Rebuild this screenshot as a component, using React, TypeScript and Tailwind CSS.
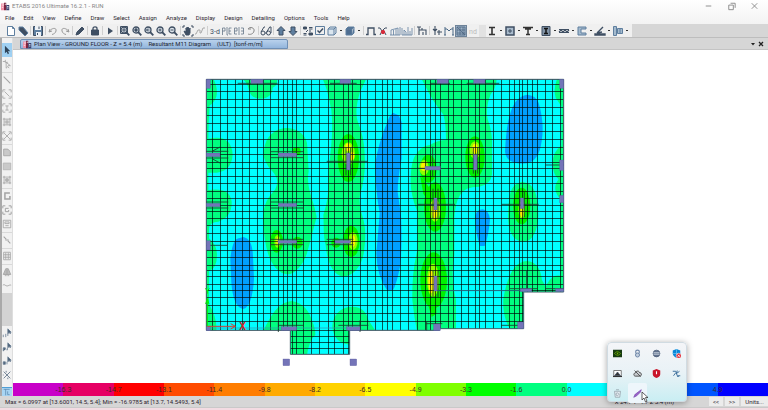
import type { ReactNode } from "react";

const ink = "#3f4f63";
const blue = "#5f7f9f";

function Glyph({ children, size = "size-3" }: { children: ReactNode; size?: string }) {
  return (
    <svg viewBox="0 0 12 12" fill="none" stroke={ink} strokeWidth="1" className={size} aria-hidden="true">
      {children}
    </svg>
  );
}

const lens = (inner: ReactNode) => (
  <>
    <circle cx="5" cy="5" r="3" fill="#dfe6ec" strokeWidth="1.3" />
    <path d="M7.2 7.2 10.3 10.3" strokeWidth="1.9" />
    {inner}
  </>
);

const cube = (fill: string) => (
  <>
    <path d="M2 4h6v6H2zM2 4l2-2h6L8 4M10 2v6l-2 2" fill={fill} stroke={blue} />
  </>
);

type Tool = { name: string; icon: ReactNode; menu?: boolean; on?: boolean };

const toolGroups: Tool[][] = [
  [
    { name: "New model", icon: <path d="M2.500 1.500h5l2 2v7h-7zM7.500 1.500v2h2" fill="#fff" stroke={blue} /> },
    { name: "Open", icon: <path d="M2 2h4l5 6-3 3-6-6z" fill={ink} stroke={blue} /> },
  ],
  [
    {
      name: "Save",
      icon: (
        <>
          <path d="M1.500 1.500h9v9h-9z" fill={blue} />
          <path d="M3 1h6v4H3zM4 7h5v4H4z" fill="#eef2f6" stroke="none" />
          <path d="M7 1.500v2.500M5.500 8v2" />
        </>
      ),
    },
  ],
  [
    { name: "Undo", icon: <path d="M2 7l1-3M2 7l3-1M2.500 6.500C4 3 10 2 9 6c-.5 2-2 3-4 3.500" stroke="#999" /> },
    { name: "Redo", icon: <path d="M10 7 9 4M10 7 7 6M9.500 6.500C8 3 2 2 3 6c.5 2 2 3 4 3.500" stroke="#999" /> },
  ],
  [{ name: "Edit", icon: <path d="m2 10 1-3 5-5 2 2-5 5z" fill={ink} /> }],
  [
    {
      name: "Lock",
      icon: (
        <>
          <path d="M4 5V3.500C4 1.300 8 1.300 8 3.500V5" strokeWidth="1.3" />
          <path d="M2.500 5h7v5h-7z" fill={ink} />
        </>
      ),
    },
  ],
  [{ name: "Run", icon: <path d="M4 2.500 9 6 4 9.500z" fill={ink} stroke="none" /> }],
  [
    { name: "Zoom window", icon: lens(<path d="M1.500 1.500h7v7h-7zM4 4h2v2H4z" />) },
    { name: "Zoom all", icon: lens(<path d="M5 3v4M3 5h4M4 4l2 2M6 4 4 6" strokeWidth="1.2" />) },
    { name: "Zoom previous", icon: lens(<path d="m6.500 5h-3M5 3.500 3.500 5 5 6.500" />) },
    { name: "Zoom in", icon: lens(<path d="M3.500 5h3M5 3.500v3" />) },
    { name: "Zoom out", icon: lens(<path d="M3.500 5h3" />) },
  ],
  [
    {
      name: "Pan",
      icon: (
        <>
          <path d="M1 3V1h2M9 1h2v2M1 9v2h2M9 11h2V9" />
          <path d="m4 10-2-4 2 1V3l1 2V2l1 3V2l1 3 1-2v5L7 10z" fill={ink} />
        </>
      ),
    },
    { name: "Refine", icon: <path d="M1 9h1l2-4h2v3h1l2-5h2" stroke="#aaa" /> },
  ],
  [
    {
      name: "Three dimensional view",
      icon: (
        <text x="6" y="9" textAnchor="middle" fontSize="7" fill={ink} stroke="none">
          3-d
        </text>
      ),
    },
    { name: "Plan view", icon: <path d="M1.500 10V3H4v3H1.500M6 2v8H7M10.500 3H8v6h2.500M8 6h2" stroke="#667688" strokeWidth=".8" /> },
    { name: "Elevation view", icon: <path d="M4 6H1.500V3H4v3M1.500 6v3H4M6 2v8M8 3h2.500v6H8M8 6h2.500" stroke="#667688" strokeWidth=".8" /> },
    { name: "Rotate", icon: <path d="M3 4c2-3 7-1 6 2-.5 3-4 4-6 3M3 4h3" stroke="#888" /> },
  ],
  [
    {
      name: "Perspective",
      icon: (
        <>
          <circle cx="3" cy="8" r="2" />
          <circle cx="8.500" cy="8" r="2" />
          <path d="M5 8h1.500M1 7l3-5h1M6.700 7l3-5H11v6" />
        </>
      ),
    },
  ],
  [
    { name: "Storey up", icon: <path d="m6 1.500 4 4H8V10H4V5.500H2z" fill={blue} /> },
    { name: "Storey down", icon: <path d="M6 10.500l4-4H8V2H4v4.500H2z" fill={blue} /> },
  ],
  [
    { name: "Object shrink", icon: <path d="M1.500 2h3v2h-3zM7 2.500h3.500M7 4h3.500M1.500 8.500h3M1.500 10h3M7 8h3.500v2H7zM6 5l-2 2M7 6h2" fill={ink} /> },
    { name: "Display options", icon: <><path d="M1.500 1.500h9v8h-9z" stroke={blue} /><path d="m3.500 5.500 2 2 3.500-4" strokeWidth="1.5" /></> },
    { name: "Assign display", icon: cube("#dbe6ef"), menu: true },
    { name: "Solid display", icon: cube("#4f6e91"), menu: true },
  ],
  [
    { name: "Show undeformed", icon: <path d="M1 9.500h2V3h6v6.500h2" strokeWidth="1.3" /> },
    { name: "Show deformed", icon: <><path d="M1 3h2l2 3 3-3h2M3 10l2-4M9 10 7 6" /><circle cx="6" cy="7" r="1.700" fill="#d62b3b" stroke="#d62b3b" /></> },
    { name: "Force diagram", icon: <path d="M1 10h10V2M2 10V5l7-2v7M4.500 10V5M7 10V4" stroke={blue} strokeWidth=".8" /> },
    { name: "Stress diagram", icon: <path d="M1 3v7h10M3 5v5M5 7v3M7 2v8M9 6v4M11 3v7M3 5l2 2" stroke={blue} strokeWidth=".8" /> },
  ],
  [{ name: "Named display", icon: <path d="M1 2h4M3 2v8M3 5h7v5M6 3v2M7 7v3" strokeWidth="1.1" /> }],
  [
    { name: "Point loads", icon: <path d="M4 1v9M4 6l-2-2M4 6l2-2M6 7h5M8 5v5" strokeWidth="1.1" /> },
    { name: "Frame loads", icon: <path d="M2 2v8M10 2v8M2 4h2l2 2 2-2h2M1 10h2M9 10h2" stroke="#4b6885" /> },
    { name: "Area display", icon: <path d="M2 2h8v8H2zM2 5h8M5 2v8M8 2v8M2 8h8M2 2l8 8" stroke="#4b6580" strokeWidth=".8" />, on: true },
    {
      name: "Not displayed",
      icon: (
        <text x="6" y="9" textAnchor="middle" fontSize="7" fill="#bbb" stroke="none">
          nd
        </text>
      ),
    },
  ],
];

const sectionTools: Tool[] = [
  { name: "Steel frame", icon: <path d="M3 2.500h6M6 2.500v7M3 9.500h6" stroke="#333" strokeWidth="1.600" />, menu: true },
  { name: "Concrete frame", icon: <><path d="M2 2h8v8H2z" fill="#a9bbcc" strokeWidth="1.500" /><path d="M5 5h2v2H5z" /></>, menu: true },
  { name: "Composite beam", icon: <path d="M1 2.500h10M3 4h6M6 3v7M4 9.500h4" stroke="#333" strokeWidth="1.500" />, menu: true },
  { name: "Composite column", icon: <><path d="M2 1.500h8v9H2z" fill="#8294a7" /><path d="M4 3.500h4M6 3.500v5M4 8.500h4" stroke="#111" strokeWidth="1.500" /></>, menu: true },
  { name: "Steel joist", icon: <path d="M1 4.500h10M1 7.500h10M1 7l2-2 2 2 2-2 2 2 2-2" strokeWidth="1.100" />, menu: true },
  { name: "Shear wall", icon: <path d="M2 2h8v2H5v4h5v2H2z" fill="#a4bacd" stroke={blue} />, menu: true },
  { name: "Concrete slab", icon: <path d="M1 9h10v1H1zM3 8l6-6M3 8l5-1" strokeWidth="1.400" />, menu: true },
  { name: "Connection", icon: <path d="M1.500 1.500h3v9h-3zM5.500 3.500h5v5h-5zM8 4v4" fill="#a4bacd" stroke={blue} />, menu: true },
];

function ToolItem({ tool }: { tool: Tool }) {
  return (
    <>
      <button
        type="button"
        aria-label={tool.name}
        className={tool.on ? "w-3 shrink-0 bg-[#9fb4c9] outline outline-[#6d8298] -outline-offset-1" : "w-3 shrink-0"}
      >
        <Glyph>{tool.icon}</Glyph>
      </button>
      {tool.menu && (
        <button type="button" aria-label={tool.name + " list"} className="flex w-[6px] shrink-0 items-center justify-center">
          <span className="h-px w-[2px] bg-[#333]" />
        </button>
      )}
    </>
  );
}

const g = "#a3a3a3";
const sideGroups: Tool[][] = [
  [
    { name: "Select", icon: <path d="M3.500 1v9l2-2 1.500 3 1.500-1-1.500-2.500H10z" fill="#2f4459" stroke="none" />, on: true },
    { name: "Reshape", icon: <path d="M1 3h3M4 1v3h3M5 4v7l2-2 1.500 2M5 4l5 4H7" stroke={g} /> },
  ],
  [
    { name: "Draw line", icon: <path d="m2 2 8 8" stroke={g} strokeWidth="1.300" /> },
    { name: "Quick line", icon: <path d="M1 4V1h3M8 1h3v3M1 8v3h3M8 11h3V8M3 3l6 6" stroke={g} /> },
    { name: "Quick column", icon: <path d="M1 4V1h3M8 1h3v3M1 8v3h3M8 11h3V8M4 3.500h4M6 3.500v5M4 8.500h4" stroke={g} /> },
    { name: "Secondary beams", icon: <path d="M1 2.500h10M1 9.500h10M2.500 1v10M9.500 1v10M5 3v6M7 3v6M3 6h6" stroke={g} /> },
    { name: "Braces", icon: <path d="M1 4V1h3M8 1h3v3M1 8v3h3M8 11h3V8M2 2l8 8M10 2l-8 8" stroke={g} /> },
  ],
  [
    { name: "Draw area", icon: <path d="M2 10.500v-8h5l3 3v5z" fill="#c9c9c9" stroke={g} /> },
    { name: "Rectangular area", icon: <path d="M1.500 2.500h9v8h-9z" fill="#c9c9c9" stroke="#b5b5b5" /> },
    { name: "Quick area", icon: <path d="M1 2.500h10M1 9.500h10M2.500 1v10M9.500 1v10M4.500 4.500h3v3h-3z" fill="#bbb" stroke={g} /> },
  ],
  [
    { name: "Draw walls", icon: <path d="M9.500 2.500h-6v7h6V6" stroke={g} strokeWidth="1.800" /> },
    { name: "Quick walls", icon: <path d="M1 4V1h3M8 1h3v3M1 8v3h3M8 11h3V8M8 4H4v4h4V6" stroke={g} strokeWidth="1.200" /> },
    { name: "Wall openings", icon: <path d="M1.500 1.500h9v9h-9zM3.500 3.500h5v2h-5zM4 8h4" stroke={g} /> },
  ],
  [{ name: "Links", icon: <path d="m2 2 3 3M7 7l3 3M4 6l4 0" stroke={g} strokeWidth="1.300" /> }],
  [{ name: "Grids", icon: <path d="M2 1.500h8v9H2zM2 4.500h8M2 7.500h8M4.500 2v8M7.500 2v8" stroke={g} /> }],
  [
    { name: "Design strips", icon: <path d="M4.500 2h3l3 7h-9zM4 9v2M6 3v8M8 9v2" fill="#bbb" stroke={g} /> },
    { name: "Tendons", icon: <path d="M1 5c2-2 3 1 5 1s3-2 5-1" stroke={g} /> },
  ],
];

const snapTools: Tool[] = [
  { name: "Select all", icon: <path d="M1.500 11V8M4.500 11V7M7 9.500V7M7 1v6l1.500-1.500L10 7l0-2h1z" stroke="#6b7f94" fill="#4b6078" /> },
  { name: "Previous selection", icon: <path d="M1.500 11V7H4v2M6 10V8h1M7 1v6l1.500-1.500L10 7l0-2h1z" stroke="#6b7f94" fill="#4b6078" /> },
  { name: "Clear selection", icon: <path d="M1.500 7H4v3H1.500zM6 10V7M7 1v6l1.500-1.500L10 7l0-2h1z" stroke="#6b7f94" fill="#4b6078" /> },
  { name: "Intersecting line", icon: <path d="m2 2 8 8M10 2 2 10M5 3v-2M2 6H1M7 9v2" stroke="#5d7086" /> },
];

function SideButton({ tool }: { tool: Tool }) {
  return (
    <button
      type="button"
      aria-label={tool.name}
      className={tool.on ? "flex h-[14px] items-center justify-center bg-[#9fd0f2]" : "flex h-[14px] items-center justify-center"}
    >
      <Glyph size="size-[10px]">{tool.icon}</Glyph>
    </button>
  );
}

const menus = ["File", "Edit", "View", "Define", "Draw", "Select", "Assign", "Analyze", "Display", "Design", "Detailing", "Options", "Tools", "Help"];

// Stress ramp, lowest band first; each label sits on the boundary to the next band.
const bands: { color: string; label?: string }[] = [
  { color: "bg-[#c800c8]", label: "-16.3" },
  { color: "bg-[#e60064]", label: "-14.7" },
  { color: "bg-[#ff0000]", label: "-13.1" },
  { color: "bg-[#ff4b00]", label: "-11.4" },
  { color: "bg-[#ff7d00]", label: "-9.8" },
  { color: "bg-[#ffaa00]", label: "-8.2" },
  { color: "bg-[#ffd200]", label: "-6.5" },
  { color: "bg-[#ffff00]", label: "-4.9" },
  { color: "bg-[#80ff00]", label: "-3.3" },
  { color: "bg-[#00ff00]", label: "-1.6" },
  { color: "bg-[#00ff80]", label: "0.0" },
  { color: "bg-[#00ffff]", label: "1.6" },
  { color: "bg-[#00a5ff]", label: "3.3" },
  { color: "bg-[#0055ff]", label: "4.9" },
  { color: "bg-[#0000ff]" },
];

const meshX = [
  19, 37, 60, 82, 107, 126, 147, 172, 189, 211, 235, 249, 262, 276, 290, 311, 333, 358, 386, 403, 429, 444, 458, 480, 503, 527, 548, 562, 578, 602, 626,
  652, 676, 691, 707, 721, 745, 760, 784, 805, 826, 838, 856, 880, 904, 928, 943, 958, 968, 983, 997, 1012, 1035, 1056, 1080, 1090,
];
const meshY = [
  22, 37, 58, 82, 106, 130, 154, 178, 202, 226, 248, 270, 289, 313, 333, 358, 379, 400, 418, 439, 460, 484, 509, 535, 555, 581, 596, 614, 637, 654, 676,
  700, 724, 748, 775, 793, 811, 829, 847,
];
const slab = "M19 22H1091V660H971V770H719V775H449V847H271V775H19Z";
const snap = (v: number) => Math.round((v - 1) / 3) * 3 + 1.5;

const columns: [number, number, number, number][] = [
  [19, 22, 12, 27], [153, 22, 36, 12], [420, 22, 32, 12], [711, 22, 34, 12], [821, 22, 34, 12], [1079, 22, 12, 27],
  [19, 243, 41, 11], [235, 243, 55, 11], [440, 243, 10, 51], [19, 394, 41, 10], [235, 394, 55, 10], [675, 283, 46, 11],
  [821, 248, 10, 46], [1079, 264, 12, 31], [1079, 370, 12, 22], [702, 378, 9, 36], [961, 378, 10, 32],
  [19, 506, 12, 28], [234, 505, 56, 9], [405, 505, 47, 9], [702, 612, 9, 45], [961, 650, 34, 9], [1067, 650, 24, 9],
  [701, 756, 20, 20], [953, 750, 18, 20], [19, 764, 12, 12], [244, 764, 46, 11], [440, 764, 40, 11],
  [249, 861, 20, 20], [450, 861, 20, 20],
];

const halos: [number, number, number, number][] = [
  [445, 258, 32, 72], [685, 290, 25, 42], [825, 255, 29, 62], [705, 405, 33, 74], [965, 402, 26, 55], [701, 625, 40, 84],
  [230, 508, 19, 34], [292, 512, 16, 18], [454, 508, 25, 47], [408, 512, 14, 15], [290, 238, 12, 12],
];
const cores: [number, number, number, number][] = [
  [445, 245, 20, 34], [672, 287, 14, 23], [825, 234, 16, 26], [705, 415, 16, 34], [965, 414, 10, 26], [699, 625, 18, 50],
  [232, 508, 9, 19], [459, 507, 14, 27],
];
const peaks: [number, number, number, number][] = [
  [444, 226, 8, 12], [456, 252, 7, 12], [671, 284, 8, 13], [825, 230, 8, 15], [704, 420, 8, 20], [965, 421, 5, 14],
  [694, 630, 9, 34], [233, 508, 4, 12], [460, 507, 6, 17],
];

function Ellipses({ items, fill }: { items: [number, number, number, number][]; fill: string }) {
  return (
    <g fill={fill}>
      {items.map(([cx, cy, rx, ry]) => (
        <ellipse key={cx + "-" + cy} cx={cx} cy={cy} rx={rx} ry={ry} />
      ))}
    </g>
  );
}

function FloorPlan() {
  return (
    <svg viewBox="-561 -66 2265 999" className="block h-auto w-full bg-white" role="img" aria-label="Resultant M11 contour of the ground floor slab">
      <clipPath id="slab">
        <path d={slab} />
      </clipPath>
      <g clipPath="url(#slab)">
        <path d={slab} fill="#00ffff" />
        <g fill="#00ff80">
          <path d="M19 22h22q14 30 8 52-8 20-20 26-4 50-4 100 70-15 73 48-4 60-73 54v52q65-10 70 35 2 45-40 60-25 0-28 20v30q24 20 24 50 0 40-24 48v100q25 40 22 80l-8 20H19z" />
          <path d="M127 22h105q0 20-14 25-1 32-38 33-30-2-34-28-3-20-19-30z" />
          <path d="M262 168c35 2 62 25 60 60l4 70c-8 40 10 80 18 110l6 27c-8 30-18 70-28 105-10 35-35 66-57 67-25 2-50-28-58-54-14-40-16-80-18-110 0-50 18-70 36-90 12-24 6-40-8-55-22-25-32-48-24-68 4-35 30-62 69-62z" />
          <path d="M368 22h130l-18 38q-17 55-7 88 22 55 21 105 4 60-14 115-4 30 6 60c14 40 10 80 6 110-4 40-30 74-62 76-34-4-49-50-53-94-8-30-5-65-7-91 20-60 14-90 16-135 8-70 14-120 8-180-8-42-15-70-26-92z" />
          <path d="M665 22h225q-3 30-18 45-16 40-9 75 10 25 13 60v105q-3 30-38 37-45 0-58 25-15 25-17 70v110q-12 60 5 135v100H652q-10-50-15-100-2-80 15-150V419q-20-50-20-90 0-60 15-80 20-30 43-30 24-15 48-15 0-50-8-76-38-50-51-80z" />
          <path d="M968 330c35 5 46 35 47 100-2 50-18 78-43 79-38-1-47-40-48-75 2-70 8-100 44-104zM980 567c28 2 42 22 46 58 14 20 12 30 4 36l-60 120h-34c-20-30-28-60-26-100 10-60 30-112 70-114z" />
          <path d="M1091 22h-20q-12 30-4 55l17 26v118q-30 20-25 65 2 25 17 36-12 14-10 31 5 20 16 28l-1 230q-25-5-40 25l-10 24h60z" />
          <path d="M275 687c35 4 55 34 61 60 8 15 10 30 10 42-12 10-20 30-25 60h-55v-74h-75c15-30 40-85 84-88zM460 704c30 2 40 20 45 40l20 30h-76v44c-30-3-50-20-52-55 2-40 30-60 63-59z" />
        </g>
        <g fill="#00a0ff">
          <path d="M130 495q28 5 29 60l3 65q-5 85-33 91-30-6-35-80l-3-70q6-60 25-62z" />
          <path d="M578 122l18 8 9 20v110q-12 60-12 100l10 70q4 90-2 150-12 60-22 74h-18q-30-40-32-110 6-70 10-120-14-80-13-150 8-60 42-139z" />
          <path d="M983 68q25 3 33 25 18 60 9 115-8 60-45 66-60 6-65-35 3-80 18-122 15-45 50-49zM848 412q20 4 22 30-4 50-16 80h-14q-15-40-14-90 4-20 22-20z" />
        </g>
        <path d="M660 310l45 60-15 25-20-30zM675 665l20 70 14-10V660z" fill="#00f400" />
        <Ellipses items={halos} fill="#00f000" />
        <Ellipses items={cores} fill="#8cff00" />
        <Ellipses items={peaks} fill="#fff000" />
        <g stroke="#000" strokeOpacity=".66" strokeWidth="3" shapeRendering="crispEdges">
          {meshX.map((x) => (
            <path key={x} d={`M${snap(x)} 22V850`} />
          ))}
          {meshY.map((y) => (
            <path key={y} d={`M19 ${snap(y)}H1091`} />
          ))}
        </g>
      </g>
      <path d={slab} fill="none" stroke="#3c5a66" strokeWidth="3" />
      <path
        d="M113 34h120M390 34h80M690 34h60M800 34h98M19 238h66M19 258h66M38 237l22-12M38 261l22 12M211 239h101M211 257h101M235 225v24M380 268h124M438 225v85M452 225v85M19 390h66M19 408h66M211 390h101M211 408h101M653 289h68M698 224v90M721 270v42M820 225v80M833 225v80M1036 279h55M653 397h112M699 350v90M714 350v90M904 397h112M959 360v75M973 360v75M211 502h101M211 518h101M380 502h80M380 518h80M19 520h63M699 595v80M714 595v80M680 750v25M677 755h50M903 760h60M930 650h84M980 596v60M235 760h77M415 760h90M235 750v30M480 745v35M1035 650h56"
        fill="none"
        stroke="#1c3a2c"
        strokeWidth="2.500"
      />
      <path d="M710 656h260M31 768h213M290 768h150" stroke="#3a88ad" strokeWidth="2" />
      <g fill="#7474b8" stroke="#5a5a9c" strokeWidth="1">
        {columns.map(([x, y, w, h]) => (
          <rect key={x + "-" + y} x={x} y={y} width={w} height={h} />
        ))}
      </g>
      <path d="M22 763V680M22 680l-5 16M22 680l5 16M22 665v-8l-6-8M22 657l6-8" stroke="#00f000" strokeWidth="3" fill="none" />
      <path d="M22 763h84M92 755l14 8-14 8" stroke="#d04038" strokeWidth="3" fill="none" />
      <text x="128" y="774" textAnchor="middle" fill="#d81c1c" fontSize="30" fontWeight="700" className="font-['Liberation_Sans',sans-serif]">
        X
      </text>
    </svg>
  );
}

const AppMark = () => (
  <svg viewBox="0 0 12 12" className="size-[9px] shrink-0" aria-hidden="true">
    <path d="M0 2h4v9H0z" fill="#ef8fa5" />
    <path d="M4 1h3v10H4z" fill="#7b2640" />
    <path d="M7 4h4v7H7z" fill="#38416f" />
    <path d="M1 4h3M5 3h2M8 6h2M8 8h2M1 7h2" stroke="#fff" strokeWidth="1" />
  </svg>
);

const trayApps: Tool[] = [
  { name: "Graphics settings", icon: <><path d="M0 1h12v10H0z" fill="#173b12" stroke="none" /><path d="M2 6c3-4 6-2 8 0-3 4-6 2-8 0z" stroke="#76b900" /><circle cx="6" cy="6" r="1" fill="#76b900" stroke="none" /></> },
  { name: "Database", icon: <><circle cx="6" cy="4" r="2.500" stroke="#6f87a8" strokeWidth="1.500" /><circle cx="6" cy="8" r="2.700" fill="#c3d0df" stroke="#6f87a8" strokeWidth="1.300" /></> },
  { name: "Network", icon: <><circle cx="6" cy="6" r="4.500" fill="#61728e" stroke="#4b5c77" /><path d="M2 5h8M2 7h8" stroke="#dfe6ef" /></> },
  { name: "Security", icon: <><path d="M6 0 11 2v4c0 3-3 5-5 6-2-1-5-3-5-6V2z" fill="#0a86d8" stroke="none" /><path d="M6 0v12M1 6h10" stroke="#64c1f3" /><circle cx="9" cy="9" r="3.500" fill="#e0303b" stroke="#fff" strokeWidth=".6" /><path d="m7.500 7.500 3 3M10.500 7.500l-3 3" stroke="#fff" /></> },
  { name: "Display driver", icon: <><path d="M1 2h10v8H1z" fill="#fff" stroke="#555" /><path d="M2 9l4-5 4 5z" fill="#333" /><path d="M0 10h12" stroke="#333" strokeWidth="1.500" /></> },
  { name: "Cloud storage", icon: <><path d="M3 9.500C0 9 1 5 3.500 5 4 2 8 2 9 5c3 0 3 4.500 0 4.500z" fill="#c9cdd1" stroke="#444" strokeWidth="1.200" /><path d="m2 2 8 8" stroke="#333" /></> },
  { name: "Antivirus", icon: <><path d="M6 0 11 2v5c0 3-3 4-5 5-2-1-5-2-5-5V2z" fill="#c9162b" stroke="none" /><path d="M6 3v4" stroke="#fff" strokeWidth="1.500" /></> },
  { name: "Bluetooth link", icon: <path d="M1 3h4l2 6h4M2 9l3-4M7 2l-1 4 4-3M7 10h2" stroke="#3c6f9c" strokeWidth="1.300" /> },
  { name: "Recycle", icon: <><path d="M2 3h8l-1 8H3z" fill="#e2eaf0" stroke="#93a0aa" /><path d="M4 6l2-1 2 2-2 2-2-1zM4 1h4" stroke="#93a0aa" /></> },
  { name: "Pen", icon: <path d="m1 11 2-4 8-6-1 3-5 5z" fill="#9b63c8" stroke="#7c4bb0" />, on: true },
];

function TrayPopup() {
  return (
    <div className="absolute right-[81px] bottom-2 z-20 h-[60px] w-20 rounded-[4px] border border-[#d0dbe2] bg-linear-to-b from-[#f4f5f8] via-[#e9f2f6] to-[#c9eef3] shadow-[0_1px_6px_rgba(0,0,0,0.35)]">
      <div className="grid grid-cols-4 grid-rows-3">
        {trayApps.map((app) => (
          <button
            key={app.name}
            type="button"
            aria-label={app.name}
            className={app.on ? "flex h-5 items-center justify-center rounded-[2px] bg-[#eef6fb]" : "flex h-5 items-center justify-center"}
          >
            <Glyph size="size-[9px]">{app.icon}</Glyph>
          </button>
        ))}
      </div>
      <svg viewBox="0 0 8 12" className="absolute top-12 left-[33px] h-3 w-2" aria-hidden="true">
        <path d="M1 1v8l2-2 1.500 4 1.500-.7L4.500 6.500H7z" fill="#fff" stroke="#222" strokeWidth=".7" />
      </svg>
    </div>
  );
}

export default function App() {
  return (
    <div className="relative w-full overflow-hidden bg-[#d6d6d6] font-[Roboto,'Open_Sans',sans-serif] text-[6px] leading-[12px] text-[#2d2530]">
      <header className="bg-linear-to-b from-white to-[#f3f3f3]">
        <div className="flex h-3 items-center text-[#858585]">
          <div className="flex flex-1 items-center gap-[2px] pl-px">
            <AppMark />
            <h1>ETABS 2016 Ultimate 16.2.1 - RUN</h1>
          </div>
          <div className="flex gap-3 pr-2">
            {[
              ["Minimize", "M3 6h6"],
              ["Restore", "M3 5h5v5H3zM5 3h5v5"],
              ["Close", "m3 3 6 6M9 3l-6 6"],
            ].map(([name, d]) => (
              <button key={name} type="button" aria-label={name}>
                <svg viewBox="0 0 12 12" fill="none" stroke="#888" className="h-3 w-[11px]" aria-hidden="true">
                  <path d={d} />
                </svg>
              </button>
            ))}
          </div>
        </div>
        <nav className="flex h-3 items-center gap-[9px] pl-[5px]">
          {menus.map((m) => (
            <button key={m} type="button" className="leading-[12px]">
              {m}
            </button>
          ))}
        </nav>
      </header>

      <div className="flex h-[13px]">
        <div className="flex items-center bg-[#f0f0f0] pr-[2px] pl-[5px]">
          {toolGroups.map((group, i) => (
            <div key={i} className="flex items-center">
              {i > 0 && <span className="ml-px h-[9px] w-[2px] border-l border-[#cfcfcf]" />}
              {group.map((t) => (
                <ToolItem key={t.name} tool={t} />
              ))}
            </div>
          ))}
          <span className="h-3 w-[7px] bg-[#e2e2e2]" />
          {sectionTools.map((t) => (
            <ToolItem key={t.name} tool={t} />
          ))}
        </div>
      </div>

      <div className="flex border-t border-[#bdbdbd]">
        <aside className="flex w-[13px] shrink-0 flex-col border-r border-l-2 border-r-[#dedede] border-l-[#a9a9a9] bg-[#f1f1f1] pt-[5px]">
          {sideGroups.map((group, i) => (
            <div key={i} className={i > 0 ? "mt-px flex flex-col border-t border-[#d9d9d9]" : "flex flex-col"}>
              {group.map((t) => (
                <SideButton key={t.name} tool={t} />
              ))}
            </div>
          ))}
          <div className="flex-1 bg-[#d3d3d3]" />
          {snapTools.map((t) => (
            <SideButton key={t.name} tool={t} />
          ))}
          <button type="button" aria-label="Snap options" className="mt-[5px] flex h-[9px] items-center justify-center border-t border-[#4f9fd6] bg-[#a8d5f3]">
            <Glyph size="size-[8px]">
              <path d="M1 2h9M4 2v9M7 5v5h3" stroke="#507fa6" />
            </Glyph>
          </button>
        </aside>

        <main className="min-w-0 flex-1">
          <div className="flex h-3 items-center justify-between border-b border-[#c4c4c4] pl-[7px]">
            <div className="flex h-[10px] w-[268px] items-center gap-[2px] self-end rounded-t-[2px] border border-[#6f8fb5] bg-linear-to-b from-[#b9d1ec] to-[#93b5dc] pl-[2px] text-[#1c2430]">
              <AppMark />
              <h2 className="whitespace-pre">Plan View - GROUND FLOOR - Z = 5.4 (m)    Resultant M11 Diagram    (ULT)  [tonf-m/m]</h2>
            </div>
            <div className="flex pr-[3px]">
              <button type="button" aria-label="Window list">
                <svg viewBox="0 0 8 8" className="size-2" aria-hidden="true">
                  <path d="M2 3h4L4 5.500z" fill="#222" />
                </svg>
              </button>
              <button type="button" aria-label="Close view">
                <svg viewBox="0 0 8 8" className="size-2" aria-hidden="true">
                  <path d="m2 2 4 4M6 2 2 6" stroke="#222" strokeWidth="1.300" />
                </svg>
              </button>
            </div>
          </div>
          <FloorPlan />
          <div className="flex h-[13px] font-['Liberation_Sans',sans-serif] text-[7px] leading-[13px] text-[#3b2b24]">
            {bands.map((b) => (
              <div key={b.color} className={`flex min-w-0 flex-1 justify-end ${b.color}`}>
                {b.label && <span className="z-10 flex w-0 justify-center">{b.label}</span>}
              </div>
            ))}
          </div>
        </main>
      </div>

      <footer className="flex h-3 items-center border-b border-[#c9c9c9] pl-[5px]">
        <p className="flex-1">Max = 6.0997 at [13.6001, 14.5, 5.4];  Min = -16.9785 at [13.7, 14.5493, 5.4]</p>
        <p className="mr-[35px]">X 24.7  Y -4.7  Z 5.4 (m)</p>
        <div className="flex gap-[2px] leading-[9px]">
          <button type="button" className="w-[14px] bg-[#ececec]">&lt;&lt;</button>
          <button type="button" className="w-[14px] bg-[#ececec]">&gt;&gt;</button>
          <button type="button" className="w-[27px] bg-[#ececec]">Units...</button>
        </div>
      </footer>
      <div className="h-[2px] bg-[#f3dbe2]" />
      <TrayPopup />
    </div>
  );
}
